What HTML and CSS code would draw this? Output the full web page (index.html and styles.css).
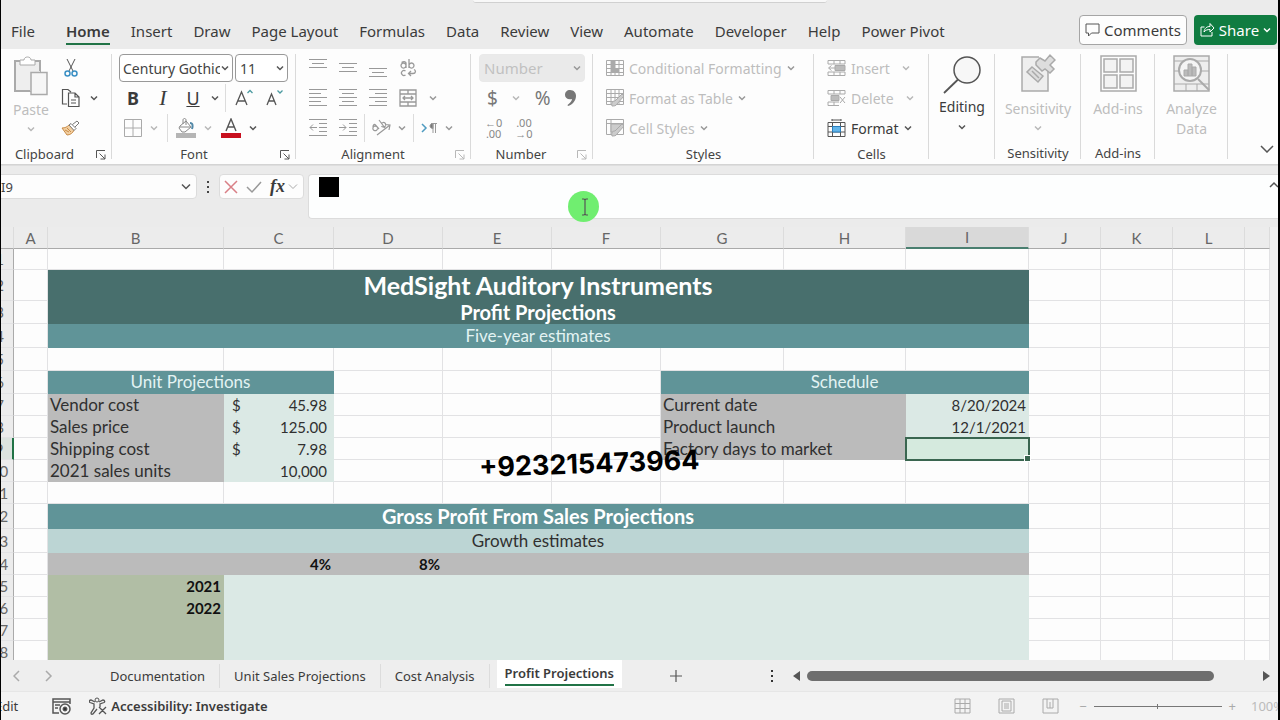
FILE: index.html
```html
<!DOCTYPE html>
<html lang="en">
<head>
    <meta charset="UTF-8">
    <meta name="viewport" content="width=device-width, initial-scale=1.0">
    <title>Profit Projections</title>
    <link rel="stylesheet" href="styles.css">
</head>
<body>
    <!-- Shared icons -->
    <svg class="defs" width="0" height="0">
        <symbol id="chev" viewBox="0 0 8 8"><path d="M1 2.500l3 3 3-3"/></symbol>
        <symbol id="launch" viewBox="0 0 10 10"><path d="M.5 8V.5H9M3.500 3.500L9 9M9 4.500V9H4.500"/></symbol>
        <symbol id="tbl" viewBox="0 0 18 16"><path d="M.5.5h17v15H.5zM.5 4.500h17M.5 8.500h17M.5 12.500h17M5 .5v15M9 .5v15M13 .5v15"/></symbol>
    </svg>

    <div class="app">
        <!-- Menu tabs -->
        <header class="topbar">
            <div class="search-edge"></div>
            <nav class="menu">
                <a href="#" class="file">File</a>
                <a href="#" class="active">Home</a>
                <a href="#">Insert</a>
                <a href="#">Draw</a>
                <a href="#">Page Layout</a>
                <a href="#">Formulas</a>
                <a href="#">Data</a>
                <a href="#">Review</a>
                <a href="#">View</a>
                <a href="#">Automate</a>
                <a href="#">Developer</a>
                <a href="#">Help</a>
                <a href="#">Power Pivot</a>
            </nav>
            <button class="comments"><svg width="15" height="14" viewBox="0 0 15 14"><path d="M1 1h13v9H6.500L3.500 13v-3H1z"/></svg>Comments</button>
            <button class="share"><svg width="15" height="15" viewBox="0 0 15 15"><path d="M4.500 5H1v9h11v-4M4 10c.5-4 3-5.500 6-5.500V1.500L14 6l-4 4V7.500C7.500 7.500 5.500 8 4 10z"/></svg>Share<svg class="chev" width="8" height="8"><use href="#chev"/></svg></button>
        </header>

        <!-- Ribbon -->
        <section class="ribbon">
            <div class="group clipboard">
                <div class="tools side">
                    <button class="big off"><svg width="36" height="40" viewBox="0 0 36 40"><path fill="#eee" d="M1.500 5.500h26v30h-26z"/><path stroke-width="2" d="M17 35H2V5h5M22 5h5v10"/><path fill="#fff" d="M7 9V4h4c0-4 7-4 7 0h4v5z"/><path fill="#f6f6f6" stroke-width="1.500" d="M18 16.500h16v22H18z"/></svg><span>Paste</span><svg class="chev" width="8" height="8"><use href="#chev"/></svg></button>
                    <div class="rows">
                        <div class="row"><button aria-label="Cut"><svg width="16" height="20" viewBox="0 0 16 20"><path d="M4 1l6 12M12 1L6 13"/><g stroke="#3a8fc4" stroke-width="1.500"><circle cx="4.500" cy="15.500" r="2.500"/><circle cx="11.500" cy="15.500" r="2.500"/></g></svg></button></div>
                        <div class="row"><button aria-label="Copy"><svg width="20" height="20" viewBox="0 0 20 20"><path stroke-width="1.200" d="M6 16H1.500V1.500H7L10 4M7.500 5H14l4 4v9.500H7.500zM14 5v4h4M10 12h5M10 15h5"/></svg></button><button aria-label="Copy options"><svg class="chev" width="8" height="8"><use href="#chev"/></svg></button></div>
                        <div class="row"><button aria-label="Format Painter"><svg width="19" height="16" viewBox="0 0 19 16"><path fill="#f2cfa2" stroke="#c98c46" d="M1 8c3 0 5-1 7-3l5 5c-1 3-4 5-7 5z"/><path stroke="#777" fill="#fff" d="M8 5l2-1.500 5 5-2 2zM11.500 4.500L16 1l2 2-4 4"/><path stroke="#c98c46" d="M4 10l4 2M6 8l4 4"/></svg></button></div>
                    </div>
                </div>
                <div class="label">Clipboard<svg class="launch" width="10" height="10"><use href="#launch"/></svg></div>
            </div>

            <div class="group font">
                <div class="tools">
                    <div class="row">
                        <select class="family" aria-label="Font"><option>Century Gothic</option></select>
                        <select class="size" aria-label="Font size"><option>11</option></select>
                    </div>
                    <div class="row style-row">
                        <button class="glyph"><b>B</b></button>
                        <button class="glyph serif"><i>I</i></button>
                        <button class="glyph"><u>U</u></button>
                        <button aria-label="Underline options"><svg class="chev" width="8" height="8"><use href="#chev"/></svg></button>
                        <span class="bar"></span>
                        <button class="glyph" aria-label="Increase font size"><svg width="18" height="18" viewBox="0 0 18 18"><path stroke-width="1.300" d="M1 16L6.500 3 12 16M3 12h7"/><path stroke="#4b9aa0" stroke-width="1.300" d="M12.500 4L15 1.500 17.500 4"/></svg></button>
                        <button class="glyph" aria-label="Decrease font size"><svg width="18" height="18" viewBox="0 0 18 18"><path stroke-width="1.300" d="M2 16L6.500 5 11 16M4 12h5"/><path stroke="#4b9aa0" stroke-width="1.300" d="M12.500 1.500L15 4l2.500-2.500"/></svg></button>
                    </div>
                    <div class="row color-row">
                        <button class="off" aria-label="Borders"><svg width="18" height="18" viewBox="0 0 18 18"><path d="M.5.5h17v17H.5zM9 .5v17M.5 9h17"/></svg></button>
                        <button class="off" aria-label="Border options"><svg class="chev" width="8" height="8"><use href="#chev"/></svg></button>
                        <span class="bar"></span>
                        <button aria-label="Fill color"><svg width="20" height="20" viewBox="0 0 20 20"><path stroke="#888" d="M4 8l6-5 5 6-6 5H6L3 10zM7 6V2c0-2 3-2 3 0v5M4 9h10"/><path stroke="#5289a8" stroke-width="2" d="M14 5c3 0 3 3 2 6"/><path fill="#b5b5b5" stroke="none" d="M0 15h20v5H0z"/></svg></button>
                        <button class="off" aria-label="Fill options"><svg class="chev" width="8" height="8"><use href="#chev"/></svg></button>
                        <button aria-label="Font color"><svg width="20" height="20" viewBox="0 0 20 20"><path stroke-width="1.400" d="M5 13L10 1l5 12M7 9h6"/><path fill="#c80f1e" stroke="none" d="M0 15h20v5H0z"/></svg></button>
                        <button aria-label="Font color options"><svg class="chev" width="8" height="8"><use href="#chev"/></svg></button>
                    </div>
                </div>
                <div class="label">Font<svg class="launch" width="10" height="10"><use href="#launch"/></svg></div>
            </div>

            <div class="group align">
                <div class="tools mid">
                    <div class="row">
                        <button aria-label="Top align"><svg width="18" height="18" viewBox="0 0 18 18"><path d="M0 .5h18M3 4.500h12M0 8.500h18"/></svg></button>
                        <button aria-label="Middle align"><svg width="18" height="18" viewBox="0 0 18 18"><path d="M0 4.500h18M3 8.500h12M0 12.500h18"/></svg></button>
                        <button aria-label="Bottom align"><svg width="18" height="18" viewBox="0 0 18 18"><path d="M0 9.500h18M3 13.500h12M0 17.500h18"/></svg></button>
                        <button aria-label="Wrap text"><svg width="18" height="18" viewBox="0 0 18 18"><path stroke-width="1.300" d="M7 3.500V9M7 6.500a2.500 2.500 0 1 0 0 .1M2.500 3.500C4 2.500 7 2 7 4.500M10 0v9M10 6.500a2.500 2.500 0 1 1 0 .1M6.500 12a2.500 2.500 0 1 0 0 4M9.500 14.500H14c3 0 3-3 1-4M12 12l-2.500 2.500L12 17"/></svg></button>
                    </div>
                    <div class="row">
                        <button aria-label="Align left"><svg width="18" height="18" viewBox="0 0 18 18"><path d="M0 .5h18M0 4.500h12M0 8.500h18M0 12.500h12M0 16.500h18"/></svg></button>
                        <button aria-label="Center"><svg width="18" height="18" viewBox="0 0 18 18"><path d="M0 .5h18M3 4.500h12M0 8.500h18M3 12.500h12M0 16.500h18"/></svg></button>
                        <button aria-label="Align right"><svg width="18" height="18" viewBox="0 0 18 18"><path d="M0 .5h18M6 4.500h12M0 8.500h18M6 12.500h12M0 16.500h18"/></svg></button>
                        <button aria-label="Merge"><svg width="18" height="18" viewBox="0 0 18 18"><path stroke-width="1.300" d="M1 1h16v16H1zM1 5h16M1 13h16M9 1v4M9 13v4M4 9h10M6 7L4 9l2 2M12 7l2 2-2 2"/></svg></button>
                        <button aria-label="Merge options"><svg class="chev" width="8" height="8"><use href="#chev"/></svg></button>
                    </div>
                    <div class="row">
                        <button aria-label="Decrease indent"><svg width="18" height="18" viewBox="0 0 18 18"><path d="M0 .5h18M10 4.500h8M10 8.500h8M10 12.500h8M0 16.500h18M1 8.500h7M4 5.500l-3 3 3 3"/></svg></button>
                        <button class="indent" aria-label="Increase indent"><svg width="18" height="18" viewBox="0 0 18 18"><path d="M0 .5h18M10 4.500h8M10 8.500h8M10 12.500h8M0 16.500h18M0 8.500h7M4 5.500l3 3-3 3"/></svg></button>
                        <span class="bar"></span>
                        <button aria-label="Orientation"><svg width="19" height="18" viewBox="0 0 19 18"><path stroke-width="1.200" d="M5 16L18 6M13 5.500l5 .5-1 5M7 10L3 5.500M4.500 7.500a2.300 2.300 0 1 0 1 2M7 1l6 8M9.500 4.500a2.300 2.300 0 1 1 0 2.500M1 8c0-2 1-3 2-2.500"/></svg></button>
                        <button aria-label="Orientation options"><svg class="chev" width="8" height="8"><use href="#chev"/></svg></button>
                        <span class="bar"></span>
                        <button aria-label="Text direction"><svg width="17" height="12" viewBox="0 0 17 12"><path stroke="#4e9bc0" stroke-width="1.500" d="M1 2l4 4-4 4"/><path fill="#777" d="M12 6.500c-4 0-4-5 0-5z"/><path d="M10 1.500h6M12 1.500V11M14.500 1.500V11"/></svg></button>
                        <button aria-label="Direction options"><svg class="chev" width="8" height="8"><use href="#chev"/></svg></button>
                    </div>
                </div>
                <div class="label">Alignment<svg class="launch off" width="10" height="10"><use href="#launch"/></svg></div>
            </div>

            <div class="group number">
                <div class="tools">
                    <div class="row"><select class="format" aria-label="Number format" disabled><option>Number</option></select></div>
                    <div class="row num-row">
                        <button class="sym">$</button>
                        <button class="off" aria-label="Currency options"><svg class="chev" width="8" height="8"><use href="#chev"/></svg></button>
                        <button class="sym">%</button>
                        <button aria-label="Comma style"><svg width="11" height="16" viewBox="0 0 11 16"><path fill="#777" stroke="none" d="M5 0c4 0 6 3 6 6 0 5-4 9-8 10l-.5-1C5 13 7 11 7 9 3 10 0 8 0 5c0-3 2-5 5-5z"/></svg></button>
                    </div>
                    <div class="row dec-row">
                        <button class="dec" aria-label="Increase decimal"><span>←0</span><span>.00</span></button>
                        <button class="dec" aria-label="Decrease decimal"><span>.00</span><span>→0</span></button>
                    </div>
                </div>
                <div class="label">Number<svg class="launch off" width="10" height="10"><use href="#launch"/></svg></div>
            </div>

            <div class="group styles">
                <div class="tools">
                    <div class="row"><button class="text off"><svg width="18" height="16"><use href="#tbl"/><path fill="#aaa" stroke="none" d="M5 1h4v12H5zM9 9h4v4H9z"/></svg>Conditional Formatting<svg class="chev" width="8" height="8"><use href="#chev"/></svg></button></div>
                    <div class="row"><button class="text off"><svg width="18" height="18" viewBox="0 0 18 18"><use href="#tbl" width="18" height="16"/><path fill="#ccc" d="M6 17c-1-4 1-5 3-5l7-7 2 2-7 8c-1 2-3 2-5 2z"/></svg>Format as Table<svg class="chev" width="8" height="8"><use href="#chev"/></svg></button></div>
                    <div class="row"><button class="text off"><svg width="18" height="18" viewBox="0 0 18 18"><path d="M.5.5h17v15H.5zM.5 4.500h17M5 .5v15"/><path fill="#ccc" d="M5 5h12L9 13H5z"/><path fill="#ccc" d="M6 17c-1-4 1-5 3-5l7-7 2 2-7 8c-1 2-3 2-5 2z"/></svg>Cell Styles<svg class="chev" width="8" height="8"><use href="#chev"/></svg></button></div>
                </div>
                <div class="label">Styles</div>
            </div>

            <div class="group cells">
                <div class="tools">
                    <div class="row"><button class="text off"><svg width="19" height="16" viewBox="0 0 19 16"><path d="M1 4V.5h17V4M1 12v3.500h17V12M7 .5V4M13 .5V4M7 12v3.500M13 12v3.500M1 4h17M1 12h17M4.500 5.500L1.500 8l3 2.500M2 8h6"/><path fill="#bbb" d="M8 5.500h10v5H8z"/></svg>Insert<svg class="chev far" width="8" height="8"><use href="#chev"/></svg></button></div>
                    <div class="row"><button class="text off"><svg width="19" height="16" viewBox="0 0 19 16"><path d="M1 4V.5h17V4M1 12v3.500h11M7 .5V4M13 .5V4M7 12v3.500M1 4h17M1 12h11M13 7l5 6M18 7l-5 6"/><path fill="#bbb" d="M4 5.500h8v5H4z"/></svg>Delete<svg class="chev far" width="8" height="8"><use href="#chev"/></svg></button></div>
                    <div class="row"><button class="text"><svg width="19" height="18" viewBox="0 0 19 18"><path d="M1 3.500h17v14H1zM1 7.500h17M1 13h17M5.500 3.500v14M13.500 3.500v14M5 1h9M5 0v2M14 0v2"/><path fill="#62b5ea" stroke="#2a7fbe" d="M5.500 7.500h8V13h-8z"/></svg>Format<svg class="chev" width="8" height="8"><use href="#chev"/></svg></button></div>
                </div>
                <div class="label">Cells</div>
            </div>

            <div class="group editing">
                <div class="tools"><button class="big"><svg width="38" height="38" viewBox="0 0 38 38"><circle cx="24" cy="14" r="13" fill="#f7f7f7" stroke-width="1.500"/><path stroke-width="1.800" d="M15 23.500L1 37"/></svg><span>Editing</span><svg class="chev" width="8" height="8"><use href="#chev"/></svg></button></div>
            </div>

            <div class="group sens">
                <div class="tools"><button class="big off"><svg width="36" height="40" viewBox="0 0 36 40"><path fill="#eee" stroke-width="1.500" d="M19 4H2v34h26V18"/><path fill="#ddd" stroke-width="1.500" d="M12 14l11 9-5 6L7 19z"/><path stroke-width="1.500" d="M12 18l7 7"/><path fill="#ddd" stroke-width="1.500" d="M16 9l4-4 5 3 5-6 5 5-5 5 4 4-4 4-5-4-3 2-6-6z"/></svg><span>Sensitivity</span><svg class="chev" width="8" height="8"><use href="#chev"/></svg></button></div>
                <div class="label">Sensitivity</div>
            </div>

            <div class="group addins">
                <div class="tools"><button class="big off"><svg width="37" height="40" viewBox="0 0 37 40"><path stroke-width="1.500" d="M1 3h35v35H1z"/><path stroke-width="1.500" fill="#f3f3f3" d="M4 6h13v13H4zM20 6h13v13H20zM4 22h13v13H4zM20 22h13v13H20z"/></svg><span>Add-ins</span></button></div>
                <div class="label">Add-ins</div>
            </div>

            <div class="group analyze">
                <div class="tools"><button class="big off"><svg width="37" height="40" viewBox="0 0 37 40"><path fill="#eee" stroke-width="1.500" d="M1 3h35v35H1z"/><path d="M1 8h35M1 18h35M1 31h35M13 31v7M24 31v7"/><circle cx="17" cy="17" r="11" fill="#f5f5f5" stroke-width="2"/><path stroke-width="2" d="M25 26l11 11"/><path fill="#bbb" d="M11 17h4v6h-4zM15 11h4v12h-4zM19 14h4v9h-4z"/></svg><span>Analyze<br>Data</span></button></div>
            </div>
            <button class="collapse" aria-label="Collapse ribbon"><svg width="14" height="8" viewBox="0 0 14 8"><path stroke-width="1.500" d="M1 1l6 6 6-6"/></svg></button>
        </section>

        <!-- Formula bar -->
        <section class="formula-bar">
            <div class="name-box">
                <input type="text" value="I9" aria-label="Name box">
                <svg width="12" height="8" viewBox="0 0 12 8"><path stroke-width="1.500" d="M2 1.500l4 4 4-4"/></svg>
            </div>
            <svg class="dots" width="4" height="12" viewBox="0 0 4 12"><path fill="#444" stroke="none" d="M1 0h2v2H1zM1 5h2v2H1zM1 10h2v2H1z"/></svg>
            <div class="fx-box">
                <button aria-label="Cancel"><svg width="14" height="14" viewBox="0 0 14 14"><path stroke="#d97f86" stroke-width="1.500" d="M1 1l12 12M13 1L1 13"/></svg></button>
                <button aria-label="Enter"><svg width="16" height="14" viewBox="0 0 16 14"><path stroke="#999" stroke-width="1.500" d="M1 7l5 5L15 2"/></svg></button>
                <button class="fx"><i>fx</i></button>
                <button class="off" aria-label="Function options"><svg width="10" height="8" viewBox="0 0 10 8"><path d="M1 1.500l4 4 4-4"/></svg></button>
            </div>
            <div class="formula">
                <span class="block"></span>
                <textarea aria-label="Formula"></textarea>
                <svg class="up" width="9" height="8" viewBox="0 0 9 8"><path stroke-width="1.500" d="M1 6l4-4 4 4"/></svg>
                <div class="pointer"><svg width="8" height="18" viewBox="0 0 8 18"><path stroke-width="1.200" d="M1 1h2l1 1 1-1h2M4 2v14M1 17h2l1-1 1 1h2"/></svg></div>
            </div>
        </section>

        <!-- Worksheet -->
        <main class="sheet">
            <table>
                <colgroup>
                    <col class="c-head"><col class="c-a"><col class="c-b"><col class="c-c"><col class="c-d"><col class="c-d"><col class="c-d">
                    <col class="c-g"><col class="c-h"><col class="c-g"><col class="c-j"><col class="c-j"><col class="c-j"><col>
                </colgroup>
                <thead>
                    <tr><th></th><th>A</th><th>B</th><th>C</th><th>D</th><th>E</th><th>F</th><th>G</th><th>H</th><th class="current">I</th><th>J</th><th>K</th><th>L</th><th></th></tr>
                </thead>
                <tbody>
                    <tr class="r21"><th>1</th><td></td><td></td><td></td><td></td><td></td><td></td><td></td><td></td><td></td><td></td><td></td><td></td><td></td></tr>
                    <tr class="r31"><th>2</th><td></td><td colspan="8" class="dark title">MedSight Auditory Instruments</td><td></td><td></td><td></td><td></td></tr>
                    <tr class="r23"><th>3</th><td></td><td colspan="8" class="dark subtitle">Profit Projections</td><td></td><td></td><td></td><td></td></tr>
                    <tr class="r24"><th>4</th><td></td><td colspan="8" class="teal">Five-year estimates</td><td></td><td></td><td></td><td></td></tr>
                    <tr class="r23"><th>5</th><td></td><td></td><td></td><td></td><td></td><td></td><td></td><td></td><td></td><td></td><td></td><td></td><td></td></tr>
                    <tr class="r23"><th>6</th><td></td><td colspan="2" class="teal">Unit Projections</td><td></td><td></td><td></td><td colspan="3" class="teal">Schedule</td><td></td><td></td><td></td><td></td></tr>
                    <tr><th>7</th><td></td><td class="grey">Vendor cost</td><td class="pale"><div class="money"><span>$</span>45.98</div></td><td></td><td></td><td></td><td class="grey" colspan="2">Current date</td><td class="pale date">8/20/2024</td><td></td><td></td><td></td><td></td></tr>
                    <tr><th>8</th><td></td><td class="grey">Sales price</td><td class="pale"><div class="money"><span>$</span>125.00</div></td><td></td><td></td><td></td><td class="grey" colspan="2">Product launch</td><td class="pale date">12/1/2021</td><td></td><td></td><td></td><td></td></tr>
                    <tr><th class="current">9</th><td></td><td class="grey">Shipping cost</td><td class="pale"><div class="money"><span>$</span>7.98</div></td><td></td><td></td><td></td><td class="grey" colspan="2">Factory days to market</td><td class="pale selected"></td><td></td><td></td><td></td><td></td></tr>
                    <tr><th>10</th><td></td><td class="grey">2021 sales units</td><td class="pale"><div class="money"><span></span>10,000</div></td><td></td><td></td><td></td><td></td><td></td><td></td><td></td><td></td><td></td><td></td></tr>
                    <tr><th>11</th><td></td><td></td><td></td><td></td><td></td><td></td><td></td><td></td><td></td><td></td><td></td><td></td><td></td></tr>
                    <tr class="r25"><th>12</th><td></td><td colspan="8" class="teal subtitle">Gross Profit From Sales Projections</td><td></td><td></td><td></td><td></td></tr>
                    <tr class="r24"><th>13</th><td></td><td colspan="8" class="light">Growth estimates</td><td></td><td></td><td></td><td></td></tr>
                    <tr><th>14</th><td></td><td class="grey"></td><td class="grey head">4%</td><td class="grey head">8%</td><td class="grey" colspan="5"></td><td></td><td></td><td></td><td></td></tr>
                    <tr><th>15</th><td></td><td class="green head">2021</td><td class="pale" colspan="7"></td><td></td><td></td><td></td><td></td></tr>
                    <tr><th>16</th><td></td><td class="green head">2022</td><td class="pale" colspan="7"></td><td></td><td></td><td></td><td></td></tr>
                    <tr><th>17</th><td></td><td class="green"></td><td class="pale" colspan="7"></td><td></td><td></td><td></td><td></td></tr>
                    <tr><th>18</th><td></td><td class="green"></td><td class="pale" colspan="7"></td><td></td><td></td><td></td><td></td></tr>
                </tbody>
            </table>
            <div class="gutter"></div>
            <div class="phone">+923215473964</div>
        </main>

        <!-- Sheet tabs -->
        <nav class="sheet-tabs">
            <button class="off" aria-label="Previous sheet"><svg width="8" height="12" viewBox="0 0 8 12"><path stroke-width="1.500" d="M6 1L1 6l5 5"/></svg></button>
            <button class="off next" aria-label="Next sheet"><svg width="8" height="12" viewBox="0 0 8 12"><path stroke-width="1.500" d="M1 1l5 5-5 5"/></svg></button>
            <a href="#">Documentation</a>
            <a href="#">Unit Sales Projections</a>
            <a href="#">Cost Analysis</a>
            <a href="#" class="active"><span>Profit Projections</span></a>
            <button class="add" aria-label="New sheet"><svg width="12" height="12" viewBox="0 0 12 12"><path stroke-width="1.200" d="M6 0v12M0 6h12"/></svg></button>
            <div class="hscroll">
                <svg width="4" height="12" viewBox="0 0 4 12"><path fill="#333" stroke="none" d="M1 0h2v2H1zM1 5h2v2H1zM1 10h2v2H1z"/></svg>
                <svg class="left" width="8" height="10" viewBox="0 0 8 10"><path fill="#555" stroke="none" d="M7 0v10L0 5z"/></svg>
                <div class="track"><div class="thumb"></div></div>
                <svg width="8" height="10" viewBox="0 0 8 10"><path fill="#555" stroke="none" d="M1 0v10l7-5z"/></svg>
            </div>
        </nav>

        <!-- Status bar -->
        <footer class="status">
            <span class="mode">Edit</span>
            <svg width="19" height="17" viewBox="0 0 19 17"><path stroke-width="1.500" d="M7 15H1V1h17v5M1 4h17M3 7h5M3 10h3"/><circle cx="13" cy="11" r="5" stroke-width="1.500"/><circle cx="13" cy="11" r="2" fill="#333"/></svg>
            <button class="access"><svg width="18" height="18" viewBox="0 0 18 18"><circle cx="8" cy="3" r="2"/><path stroke-width="1.300" d="M6 5L2 3C0 3 0 5 1 5.500L5 7v4l-3 5c0 2 2 1 2 1l4-5M10 5l4-2c2 0 2 2 1 2.500L11 7v3M10 10l7 7M17 10l-7 7"/></svg>Accessibility: Investigate</button>
            <div class="views">
                <button aria-label="Normal"><svg width="17" height="16" viewBox="0 0 17 16"><path d="M1 1h15v14H1zM1 5.500h15M1 10.500h15M6 1v14M11 1v14"/></svg></button>
                <button aria-label="Page layout"><svg width="17" height="16" viewBox="0 0 17 16"><path d="M1 1h15v14H1zM4 3h9v10H4zM6 6h5M6 8h5M6 10h5"/></svg></button>
                <button aria-label="Page break"><svg width="17" height="16" viewBox="0 0 17 16"><path d="M1 1h15v14H1zM5 1v9h6V1M8 4v6"/></svg></button>
            </div>
            <label class="zoom">− <input type="range" min="0" max="100" value="50" aria-label="Zoom"> +</label>
            <span class="percent">100%</span>
        </footer>
    </div>
</body>
</html>
```
FILE: styles.css
```css
* {
    box-sizing: border-box;
}
body {
    margin: 0;
    height: 100vh;
    overflow: hidden;
    background: #000;
    font-family: "Noto Sans", sans-serif;
    font-size: 13px;
    color: #3b3b3b;
}
.defs {
    position: absolute;
}
.app {
    display: flex;
    flex-direction: column;
    height: 100vh;
    margin: 0 2px 0 1px;
    overflow: hidden;
    background: #ebebeb;
}
svg {
    display: block;
    flex: none;
    fill: none;
    stroke: #555;
}
button {
    display: flex;
    align-items: center;
    justify-content: center;
    padding: 0;
    border: none;
    background: none;
    font-family: inherit;
    font-size: 15px;
    color: inherit;
    cursor: pointer;
}
a {
    color: inherit;
    text-decoration: none;
}
.chev {
    stroke-width: 1.5;
}
.off {
    color: #bdbdbd;
}
.off svg {
    stroke: #aaa;
}
.off .chev, svg.off {
    stroke: #b8b8b8;
}

/* Menu tabs */
.topbar {
    display: flex;
    align-items: center;
    flex: none;
    height: 49px;
    padding-top: 12px;
    position: relative;
    font-size: 15px;
}
.search-edge {
    position: absolute;
    top: 0;
    left: 37%;
    width: 354px;
    height: 3px;
    background: #f8f8f8;
    border-bottom: 1px solid #d0d0d0;
    border-radius: 0 0 6px 6px;
}
.menu {
    display: flex;
    flex: 1;
    gap: 21px;
    padding-left: 10px;
    white-space: nowrap;
}
.menu a {
    line-height: 24px;
    padding-top: 2px;
    border-bottom: 2px solid transparent;
}
.menu .file {
    margin-right: 10px;
}
.menu .active {
    font-weight: 600;
    border-color: #217346;
}
.comments, .share {
    height: 30px;
    gap: 4px;
    margin-bottom: 2px;
    border-radius: 4px;
}
.comments {
    width: 108px;
    background: #fdfdfd;
    border: 1px solid #a5a5a5;
}
.share {
    width: 83px;
    margin-left: 7px;
    margin-right: 1px;
    background: #107c41;
    color: #fff;
}
.share svg {
    stroke: #fff;
}

/* Ribbon */
.ribbon {
    display: flex;
    flex: none;
    height: 116px;
    position: relative;
    background: #fdfdfd;
    border-bottom: 1px solid #d4d4d4;
}
.group {
    display: flex;
    flex-direction: column;
    flex: none;
    position: relative;
    padding-top: 4px;
}
.group::after {
    content: "";
    position: absolute;
    top: 5px;
    bottom: 5px;
    right: 0;
    border-right: 1px solid #dadada;
}
.tools {
    height: 90px;
}
.side {
    display: flex;
}
.row {
    display: flex;
    align-items: center;
    height: 30px;
}
.label {
    position: relative;
    text-align: center;
    line-height: 22px;
    color: #444;
}
.launch {
    position: absolute;
    right: 6px;
    top: 7px;
}
.bar {
    width: 1px;
    height: 28px;
    background: #dcdcdc;
}
.big {
    flex-direction: column;
    width: 100%;
    font-size: 14px;
    line-height: 20px;
}
.big span {
    padding-top: 6px;
}
.big .chev {
    margin-top: 5px;
}
.clipboard { width: 111px; }
.clipboard .label { padding-right: 24px; }
.clipboard .big {
    width: 60px;
    justify-content: flex-start;
    padding-top: 3px;
}
.clipboard .big span {
    padding-top: 4px;
}
.clipboard .row { gap: 9px; }
.clipboard .row:first-child { padding-left: 2px; }

.font { width: 184px; }
.font .label { padding-right: 20px; }
.font select, .format {
    appearance: none;
    height: 28px;
    border: 1px solid #999;
    border-radius: 4px;
    font-family: inherit;
    font-size: 14px;
    color: #444;
    background: #fff url("data:image/svg+xml,%3Csvg xmlns='http://www.w3.org/2000/svg' width='8' height='8'%3E%3Cpath d='M1 2.500l3 3 3-3' fill='none' stroke='%23555' stroke-width='1.500'/%3E%3C/svg%3E") no-repeat right 3px center;
}
.font .family {
    width: 114px;
    margin: 0 2px 0 7px;
    padding: 0 12px 0 3px;
}
.font .size {
    width: 53px;
    padding: 0 14px 0 4px;
}
.style-row {
    gap: 6px;
    padding-left: 9px;
}
.color-row {
    justify-content: space-between;
    padding: 0 39px 0 12px;
}
.glyph {
    width: 24px;
    font-size: 18px;
}
.serif {
    font-family: "Liberation Serif", serif;
    font-size: 22px;
}

.align { width: 175px; }
.align .tools svg { stroke: #999; }
.mid { padding-left: 13px; }
.mid .row { gap: 12px; }
.mid .row:last-child { gap: 7px; }
.mid .indent { margin-left: 5px; }
.align .label { padding-right: 21px; }

.number { width: 122px; }
.number .label { padding-right: 22px; }
.number .format {
    width: 106px;
    margin-left: 8px;
    padding: 0 16px 0 4px;
    border-color: #ddd;
    background-color: #dedede;
    color: #999;
    font-size: 15px;
    opacity: .6;
}
.num-row {
    justify-content: space-between;
    padding: 0 17px 0 16px;
}
.sym {
    font-size: 19px;
    color: #777;
}
.dec-row {
    gap: 13px;
    padding-left: 14px;
}
.dec {
    flex-direction: column;
    font-size: 11px;
    line-height: 11px;
    color: #888;
}
.dec span {
    height: 11px;
}

.styles { width: 221px; }
.styles .tools, .cells .tools { padding-left: 13px; }
.text {
    gap: 5px;
    font-size: 14px;
}
.styles .text .chev { stroke: #999; }
.cells { width: 115px; }
.far { margin-left: 7px; }
.editing { width: 66px; }
.editing .big {
    padding-top: 3px;
}
.editing .big span { padding-top: 3px; }
.editing .big .chev { margin-top: 6px; }
.sens { width: 86px; }
.addins { width: 74px; }
.analyze { width: 73px; }
.collapse {
    margin: auto 4px 11px auto;
}

/* Formula bar */
.formula-bar {
    display: flex;
    flex: none;
    align-items: flex-start;
    height: 62px;
    padding-top: 8px;
    border-top: 1px solid #dedede;
}
.name-box, .fx-box {
    display: flex;
    align-items: center;
    height: 25px;
    background: #fdfdfd;
    border: 1px solid #dcdcdc;
    border-radius: 4px;
}
.name-box {
    width: 201px;
    margin-left: -5px;
    padding: 0 4px;
}
.name-box input {
    flex: 1;
    min-width: 0;
    padding: 0;
    border: none;
    background: none;
    font-family: inherit;
    font-size: 13px;
    color: #444;
}
.dots {
    margin: 7px 9px 0;
}
.fx-box {
    gap: 8px;
    width: 85px;
    padding-left: 4px;
}
.fx {
    font-family: "Liberation Serif", serif;
    font-size: 18px;
    font-weight: bold;
}
.fx-box .off { margin-left: -5px; }
.formula {
    display: flex;
    flex: 1;
    height: 45px;
    margin-left: 4px;
    padding: 2px 0 0 10px;
    position: relative;
    background: #fdfefe;
    border: 1px solid #dcdcdc;
    border-right: none;
    border-radius: 4px 0 0 4px;
}
.block {
    width: 20px;
    height: 20px;
    background: #000;
}
.formula textarea {
    flex: 1;
    border: none;
    background: none;
    resize: none;
}
.up {
    margin-top: 4px;
}
.pointer {
    display: flex;
    align-items: center;
    justify-content: center;
    position: absolute;
    left: 259px;
    top: 16px;
    width: 31px;
    height: 31px;
    padding-left: 3px;
    border-radius: 50%;
    background: #70ee70;
}

/* Worksheet */
.sheet {
    display: flex;
    flex: 1;
    min-height: 0;
    position: relative;
    overflow: hidden;
}
table {
    flex: 1;
    align-self: flex-start;
    width: 100%;
    margin-left: -15px;
    table-layout: fixed;
    border-collapse: separate;
    border-spacing: 0;
    font-family: Lato, sans-serif;
    font-size: 17px;
    color: #303030;
}
.c-head { width: 28px; }
.c-a { width: 34px; }
.c-b { width: 176px; }
.c-c { width: 110px; }
.c-d { width: 109px; }
.c-g { width: 123px; }
.c-h { width: 122px; }
.c-j { width: 72px; }
th, td {
    height: 22px;
    padding: 0 2px;
    line-height: 20px;
    border-right: 1px solid #e2e2e4;
    border-bottom: 1px solid #e2e2e4;
    white-space: nowrap;
}
th {
    padding: 0;
    font-weight: 400;
    font-size: 15px;
    color: #666;
    background: #ececec;
}
thead th {
    border-bottom-color: #aaa;
    border-right-color: #dcdcdc;
}
tbody th {
    border-right-color: #aaa;
}
td {
    background: #fdfdfd;
}
.r21 > * { height: 21px; }
.r23 > * { height: 23px; }
.r24 > * { height: 24px; }
.r25 > * { height: 25px; }
.r31 > * { height: 31px; }
thead .current {
    background: #d9d9d9;
    border-bottom: 2px solid #4a7f70;
}
tbody .current {
    background: #dce3df;
    border-right: 2px solid #217346;
}
.dark, .teal, .light {
    text-align: center;
    color: #fff;
}
.dark {
    background: #486f6d;
    border-color: #486f6d;
}
.teal {
    background: #609498;
    border-color: #609498;
    color: #e3f3f3;
}
.light {
    background: #bcd5d4;
    border-color: #bcd5d4;
    color: #303030;
}
.grey {
    background: #bbb;
    border-color: #bbb;
}
.pale {
    background: #dbe9e5;
    border-color: #dbe9e5;
}
.green {
    background: #b1bea5;
    border-color: #b1bea5;
}
.title {
    font-size: 25px;
    font-weight: bold;
    line-height: 30px;
}
.subtitle {
    font-size: 20px;
    font-weight: bold;
    line-height: 22px;
    color: #fff;
}
.head {
    text-align: right;
    font-size: 15px;
    font-weight: bold;
    color: #111;
}
.date {
    text-align: right;
    font-size: 15px;
}
.money {
    display: flex;
    justify-content: space-between;
    padding: 0 4px 0 6px;
    font-size: 15px;
}
.selected {
    position: relative;
    background: #d5eade;
    outline: 2px solid #3a6650;
    outline-offset: -1px;
}
.selected::after {
    content: "";
    position: absolute;
    right: -3px;
    bottom: -3px;
    width: 5px;
    height: 5px;
    background: #3a6650;
    border: 1px solid #fff;
}
.gutter {
    width: 8px;
    background: #f0f0f0;
}
.phone {
    position: absolute;
    left: 478px;
    top: 220px;
    font-family: Inter, sans-serif;
    font-size: 27px;
    font-weight: 700;
    color: #000;
    transform: rotate(-2deg);
}

/* Sheet tabs */
.sheet-tabs {
    display: flex;
    flex: none;
    align-items: center;
    height: 32px;
    background: #eee;
    border-bottom: 1px solid #e6e6e6;
}
.sheet-tabs > button { margin-left: 12px; }
.sheet-tabs .next { margin: 0 43px 0 24px; }
.sheet-tabs a {
    padding: 0 14px;
    line-height: 24px;
    border-right: 1px solid #dcdcdc;
}
.sheet-tabs .active {
    align-self: flex-start;
    margin-left: 7px;
    padding: 3px 8px 0;
    height: 28px;
    border-right: none;
    background: #fff;
    font-weight: 600;
}
.active span {
    display: block;
    line-height: 21px;
    border-bottom: 2px solid #217346;
}
.sheet-tabs .add {
    margin-left: 48px;
}
.hscroll {
    display: flex;
    flex: 1;
    align-items: center;
    margin: 0 8px 0 88px;
}
.left {
    margin: 0 6px 0 19px;
}
.track {
    flex: 1;
    padding-right: 48px;
}
.thumb {
    height: 10px;
    border-radius: 5px;
    background: #6e6e6e;
}

/* Status bar */
.status {
    display: flex;
    flex: none;
    align-items: center;
    height: 28px;
    background: #f3f3f3;
    white-space: nowrap;
}
.mode {
    margin: 0 34px 0 -6px;
}
.access {
    gap: 4px;
    margin-left: 18px;
    font-size: 13px;
    font-weight: 600;
}
.views {
    display: flex;
    gap: 27px;
    margin-left: auto;
}
.views svg { stroke: #aaa; }
.zoom {
    display: flex;
    align-items: center;
    gap: 7px;
    margin-left: 20px;
    color: #aaa;
}
.zoom input {
    appearance: none;
    width: 128px;
    height: 1px;
    margin: 0;
    background: #777;
}
.zoom input::-webkit-slider-thumb {
    appearance: none;
    width: 1px;
    height: 5px;
    background: #777;
}
.percent {
    width: 27px;
    margin-left: 15px;
    overflow: hidden;
    color: #bbb;
}
```
